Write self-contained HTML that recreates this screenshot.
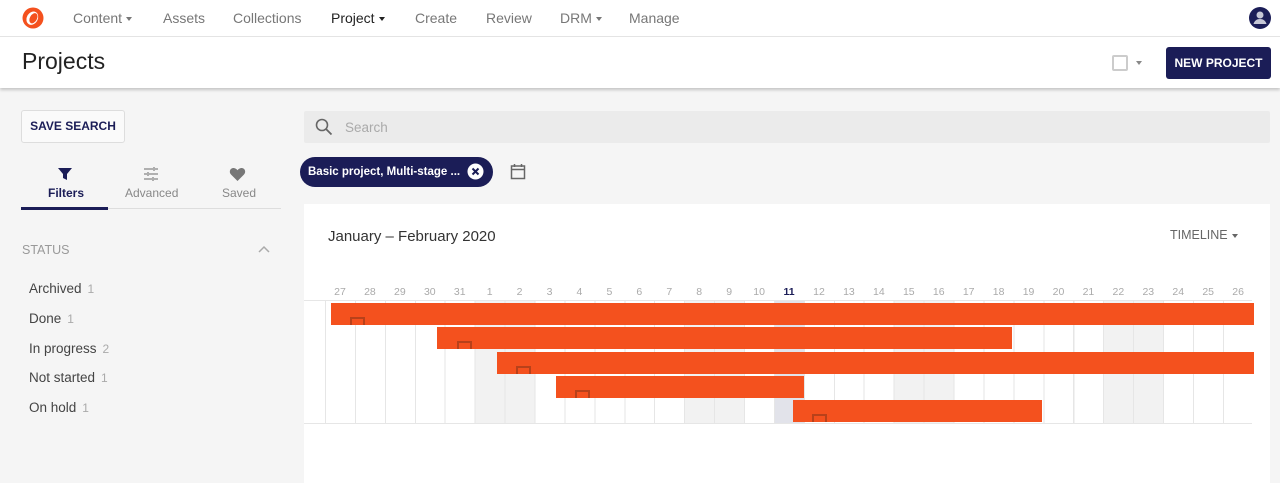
<!DOCTYPE html>
<html><head><meta charset="utf-8"><style>
*{box-sizing:border-box;margin:0;padding:0}
body{width:1280px;height:483px;overflow:hidden;background:#f5f5f5;font-family:"Liberation Sans",sans-serif;position:relative;color:#333}
.a{position:absolute}
.nav{top:0;left:0;width:1280px;height:37px;background:#fff;border-bottom:1px solid #e6e6e6}
.nav span{position:absolute;top:10px;font-size:14px;color:#777}
.car{display:inline-block;border-left:3.5px solid transparent;border-right:3.5px solid transparent;border-top:4px solid currentColor;vertical-align:middle;margin-left:4px}
.tb{top:37px;left:0;width:1280px;height:51px;background:#fff;box-shadow:0 2px 3px rgba(0,0,0,.2)}
.col{top:300px;height:123px;width:29.93px}
.bar{background:#f4511e;height:22px}
.mk{width:15px;height:8px;border:2px solid #b8411a;border-bottom:none}
.st{left:29px;font-size:13.5px;color:#444}
.st i{font-style:normal;color:#aaa;font-size:12px;margin-left:6px}
</style></head><body>
<div class="a nav">
<svg class="a" style="left:21px;top:6px" width="24" height="24" viewBox="0 0 24 24"><circle cx="12" cy="12" r="10.5" fill="#f4511e"/><ellipse cx="11.5" cy="12.5" rx="5.5" ry="7" fill="#fff" transform="rotate(30 12 12)"/><ellipse cx="12.5" cy="12" rx="3.5" ry="5.5" fill="#f4511e" transform="rotate(30 12 12)"/></svg>
<span style="left:73px">Content<i class="car"></i></span>
<span style="left:163px">Assets</span>
<span style="left:233px">Collections</span>
<span style="left:331px;color:#222">Project<i class="car"></i></span>
<span style="left:415px">Create</span>
<span style="left:486px">Review</span>
<span style="left:560px">DRM<i class="car"></i></span>
<span style="left:629px">Manage</span>
<svg class="a" style="left:1248px;top:6px" width="24" height="24" viewBox="0 0 24 24"><circle cx="12" cy="12" r="11" fill="#1b1d57"/><circle cx="12" cy="9" r="3.5" fill="#c6c7d6"/><path d="M5.5 18c1-3.5 3.5-5 6.5-5s5.5 1.5 6.5 5z" fill="#c6c7d6"/></svg>
</div>
<div class="a tb">
<div class="a" style="left:22px;top:11px;font-size:23px;color:#222">Projects</div>
<div class="a" style="left:1112px;top:18px;width:16px;height:16px;border:2px solid #ccc;border-radius:2px"></div>
<i class="a car" style="left:1136px;top:24px;color:#888;margin:0"></i>
<div class="a" style="left:1166px;top:10px;width:105px;height:32px;background:#1b1d57;border-radius:3px;color:#fff;font-size:12px;font-weight:bold;text-align:center;line-height:32px">NEW PROJECT</div>
</div>
<div class="a" style="left:21px;top:110px;width:104px;height:33px;border:1px solid #ddd;border-radius:3px;background:#fafafa;color:#1b1d57;font-size:12px;font-weight:bold;text-align:center;line-height:31px">SAVE SEARCH</div>
<svg class="a" style="left:57px;top:166px" width="16" height="16" viewBox="0 0 16 16"><path d="M1 2h14l-5 6v6l-4-2V8z" fill="#1b1d57"/></svg>
<div class="a" style="left:48px;top:186px;font-size:12px;font-weight:bold;color:#1b1d57">Filters</div>
<svg class="a" style="left:143px;top:166px" width="16" height="16" viewBox="0 0 16 16" stroke="#888" stroke-width="1.3"><path d="M1 3h9M12 3h3M1 8h3M6 8h9M1 13h8M11 13h4M11 1v4M5 6v4M10 11v4"/></svg>
<div class="a" style="left:125px;top:186px;font-size:12px;color:#888">Advanced</div>
<svg class="a" style="left:229px;top:166px" width="17" height="16" viewBox="0 0 17 16"><path d="M8.5 15L2 8.5C0 6.5 0.5 2.5 4 2c2-.3 3.5 1 4.5 2.2C9.5 3 11 1.7 13 2c3.5.5 4 4.5 2 6.5z" fill="#777"/></svg>
<div class="a" style="left:222px;top:186px;font-size:12px;color:#888">Saved</div>
<div class="a" style="left:21px;top:208px;width:260px;height:1px;background:#ddd"></div>
<div class="a" style="left:21px;top:207px;width:87px;height:3px;background:#1b1d57"></div>
<div class="a" style="left:22px;top:243px;font-size:12.5px;color:#999">STATUS</div>
<svg class="a" style="left:258px;top:245px" width="12" height="8" viewBox="0 0 12 8"><path d="M1 7l5-5 5 5" fill="none" stroke="#aaa" stroke-width="1.5"/></svg>
<div class="a st" style="top:281px">Archived<i>1</i></div>
<div class="a st" style="top:311px">Done<i>1</i></div>
<div class="a st" style="top:341px">In progress<i>2</i></div>
<div class="a st" style="top:370px">Not started<i>1</i></div>
<div class="a st" style="top:400px">On hold<i>1</i></div>
<div class="a" style="left:304px;top:111px;width:966px;height:32px;background:#ebebeb;border-radius:2px"></div>
<svg class="a" style="left:315px;top:118px" width="18" height="18" viewBox="0 0 18 18"><circle cx="7" cy="7" r="5.5" fill="none" stroke="#666" stroke-width="1.6"/><path d="M11 11l5.5 5.5" stroke="#666" stroke-width="1.8"/></svg>
<div class="a" style="left:345px;top:120px;font-size:13.5px;color:#aaa">Search</div>
<div class="a" style="left:300px;top:157px;width:193px;height:30px;background:#1b1d57;border-radius:15px;color:#fff;font-size:11.5px;font-weight:bold;line-height:30px;padding-left:8px">Basic project, Multi-stage ...</div>
<svg class="a" style="left:467px;top:163px" width="17" height="17" viewBox="0 0 17 17"><circle cx="8.5" cy="8.5" r="8" fill="#fff"/><path d="M5.5 5.5l6 6M11.5 5.5l-6 6" stroke="#1b1d57" stroke-width="2"/></svg>
<svg class="a" style="left:510px;top:163px" width="16" height="17" viewBox="0 0 16 17"><rect x="1.5" y="3" width="13" height="12.5" fill="none" stroke="#666" stroke-width="1.5"/><path d="M1.5 6.5h13M4.5 1v3M11.5 1v3" stroke="#666" stroke-width="1.5"/></svg>
<div class="a" style="left:304px;top:204px;width:966px;height:279px;background:#fff"></div>
<div class="a" style="left:328px;top:228px;font-size:15px;color:#333">January – February 2020</div>
<div class="a" style="left:1170px;top:228px;font-size:12.5px;color:#666">TIMELINE<i class="car"></i></div>
<div class="a col" style="left:474.65px;background:#f2f2f2"></div>
<div class="a col" style="left:504.6px;background:#f2f2f2"></div>
<div class="a col" style="left:684.2px;background:#f2f2f2"></div>
<div class="a col" style="left:714.1px;background:#f2f2f2"></div>
<div class="a col" style="left:774px;background:#e2e3ea"></div>
<div class="a col" style="left:893.7px;background:#f2f2f2"></div>
<div class="a col" style="left:923.6px;background:#f2f2f2"></div>
<div class="a col" style="left:1103.2px;background:#f2f2f2"></div>
<div class="a col" style="left:1133.1px;background:#f2f2f2"></div>
<div class="a" style="left:325px;top:300px;width:928px;height:123px;background:repeating-linear-gradient(90deg,#e6e6e6 0 1px,transparent 1px 29.93px)"></div>
<div class="a" style="left:304px;top:300px;width:948px;height:1px;background:#e6e6e6"></div>
<div class="a" style="left:304px;top:423px;width:948px;height:1px;background:#e6e6e6"></div>
<div class="a" style="left:325px;top:286px;width:928px;display:flex;font-size:10.5px;color:#aaa;text-align:center">
<span style="flex:1">27</span><span style="flex:1">28</span><span style="flex:1">29</span><span style="flex:1">30</span><span style="flex:1">31</span><span style="flex:1">1</span><span style="flex:1">2</span><span style="flex:1">3</span><span style="flex:1">4</span><span style="flex:1">5</span><span style="flex:1">6</span><span style="flex:1">7</span><span style="flex:1">8</span><span style="flex:1">9</span><span style="flex:1">10</span><span style="flex:1;color:#1b1d57;font-weight:bold">11</span><span style="flex:1">12</span><span style="flex:1">13</span><span style="flex:1">14</span><span style="flex:1">15</span><span style="flex:1">16</span><span style="flex:1">17</span><span style="flex:1">18</span><span style="flex:1">19</span><span style="flex:1">20</span><span style="flex:1">21</span><span style="flex:1">22</span><span style="flex:1">23</span><span style="flex:1">24</span><span style="flex:1">25</span><span style="flex:1">26</span></div>
<div class="a bar" style="left:331px;top:303px;width:923px"></div>
<div class="a bar" style="left:437px;top:327px;width:575px"></div>
<div class="a bar" style="left:497px;top:352px;width:757px"></div>
<div class="a bar" style="left:556px;top:376px;width:248px"></div>
<div class="a bar" style="left:793px;top:400px;width:249px"></div>
<div class="a mk" style="left:350px;top:317px"></div>
<div class="a mk" style="left:457px;top:341px"></div>
<div class="a mk" style="left:516px;top:366px"></div>
<div class="a mk" style="left:575px;top:390px"></div>
<div class="a mk" style="left:812px;top:414px"></div>
</body></html>
